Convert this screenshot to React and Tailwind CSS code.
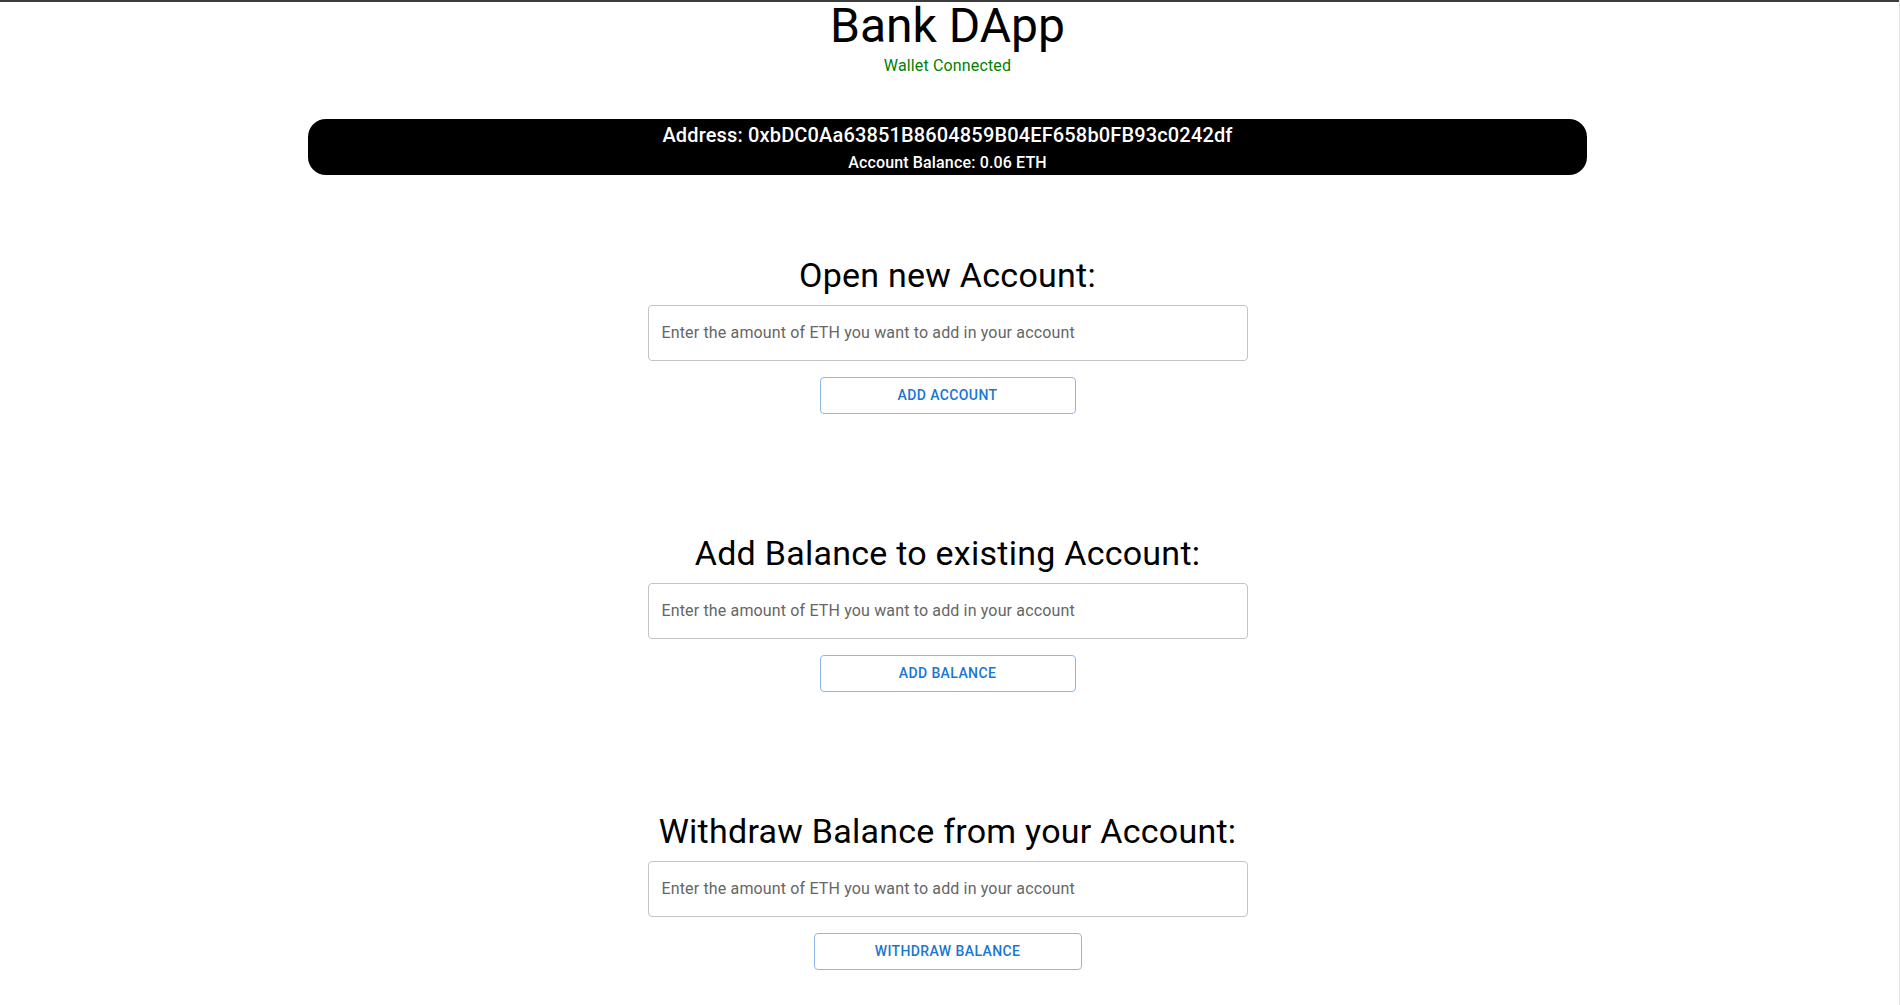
import React, { useState } from 'react';

const sections = [
  { title: 'Open new Account:', action: 'Add Account', width: 'w-[256px]' },
  { title: 'Add Balance to existing Account:', action: 'Add Balance', width: 'w-[256px]' },
  { title: 'Withdraw Balance from your Account:', action: 'Withdraw Balance', width: 'w-[268px]' },
];

// One form block: heading, amount field and outlined action button
function ActionForm({ title, action, width }) {
  const [amount, setAmount] = useState('');

  return (
    <div className="flex flex-col items-center">
      <h4 className="text-[34px] leading-[42px] tracking-[0.25px] text-black">{title}</h4>
      <input
        type="text"
        value={amount}
        onChange={(e) => setAmount(e.target.value)}
        placeholder="Enter the amount of ETH you want to add in your account"
        className="mt-[9px] w-[600px] h-[56px] rounded-[4px] border border-[#c4c4c4] px-[13px] pb-[2px] text-base tracking-[0.15px] text-black outline-none placeholder:text-[#666]"
      />
      <button
        className={`mt-[16px] ${width} h-[37px] pb-px rounded-[4px] border border-[#8cbae8] text-sm font-medium uppercase tracking-[0.4px] text-[#1976d2]`}
      >
        {action}
      </button>
    </div>
  );
}

export default function App() {
  const address = '0xbDC0Aa63851B8604859B04EF658b0FB93c0242df';
  const balance = '0.06';

  return (
    <div className="relative min-h-[1005px] bg-white font-['Roboto',sans-serif]">
      {/* top edge strip and right edge line */}
      <div className="absolute inset-x-0 top-0 h-[2px] bg-[#3c3c3c]" />
      <div className="absolute right-0 top-0 bottom-0 w-px bg-[#e3e3e3]" />

      <div className="w-[1895px] flex flex-col items-center">
        <h1 className="text-[48px] leading-[52px] text-black">Bank DApp</h1>
        <p className="mt-[2px] text-base leading-6 tracking-[0.15px] text-[#008000]">Wallet Connected</p>

        <div className="mt-[41px] w-[1279px] h-[56px] rounded-[18px] bg-black text-white flex flex-col items-center">
          <h6 className="text-[20px] leading-[32px] font-medium tracking-[0.15px]">Address: {address}</h6>
          <p className="text-base leading-6 font-medium tracking-[0.15px]">Account Balance: {balance} ETH</p>
        </div>

        <div className="mt-[79px] flex flex-col gap-[118px]">
          {sections.map((s) => (
            <ActionForm key={s.action} {...s} />
          ))}
        </div>
      </div>
    </div>
  );
}
